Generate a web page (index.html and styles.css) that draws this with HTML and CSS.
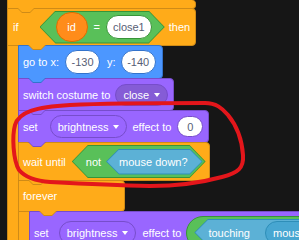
FILE: index.html
```html
<!DOCTYPE html>
<html lang="en">
<head>
	<meta charset="UTF-8">
	<title>if id = close1</title>
	<link rel="stylesheet" href="styles.css">
</head>
<body>

	<div class="script">
		<div class="block control cap"></div>

		<div class="c-block control">
			<div class="c-head if-head">
				<span class="label-if">if</span>
				<div class="hex op eq-hex">
					<div class="hex-in">
						<span class="var-pill">id</span>
						<span class="eq">=</span>
						<span class="field">close1</span>
					</div>
				</div>
				<span class="label-then">then</span>
			</div>
			<div class="c-mouth">
				<div class="c-arm"></div>
				<div class="stack">

					<div class="block motion goto">
						<span>go to x:</span>
						<span class="field">-130</span>
						<span class="label-y">y:</span>
						<span class="field">-140</span>
					</div>

					<div class="block looks switch">
						<span>switch costume to</span>
						<span class="menu shadow">close <i class="arrow"></i></span>
					</div>

					<div class="block looks set">
						<span>set</span>
						<span class="menu">brightness <i class="arrow"></i></span>
						<span>effect to</span>
						<span class="field small">0</span>
					</div>

					<div class="block control wait">
						<span>wait until</span>
						<div class="hex op not-hex">
							<div class="hex-in">
								<span>not</span>
								<div class="hex sense mouse-hex">
									<div class="hex-in">mouse down?</div>
								</div>
							</div>
						</div>
					</div>

					<div class="c-block control">
						<div class="c-head forever-head">
							<span>forever</span>
						</div>
						<div class="c-mouth">
							<div class="c-arm"></div>
							<div class="stack">
								<div class="block looks set-inner">
									<span>set</span>
									<span class="menu">brightness <i class="arrow"></i></span>
									<span class="label-effect">effect to</span>
									<div class="round-op op">
										<div class="hex sense touch-hex">
											<div class="hex-in">
												<span>touching</span>
												<span class="menu sense-menu">mouse-pointer <i class="arrow"></i></span>
											</div>
										</div>
									</div>
								</div>
							</div>
						</div>
					</div>

				</div>
			</div>
		</div>
	</div>

	<svg class="scribble" width="299" height="240" viewBox="0 0 299 240">
		<path d="M 19 170 C 13 160, 12 136, 15 125 C 19 112, 35 107, 70 105 C 110 103, 160 103, 205 103 C 216 103, 222 108, 228 115 C 237 126, 242 140, 243 155 C 244 168, 238 173, 222 177 C 200 183, 175 186, 150 186 C 110 185, 70 183, 50 182 C 35 181, 25 177, 19 170 Z" />
	</svg>

</body>
</html>
```

FILE: styles.css
```css
* {
	margin: 0;
	padding: 0;
	box-sizing: border-box;
}
body {
	background-color: #161616;
	color: #fff;
	font-family: "Liberation Sans", Arial, sans-serif;
	font-size: 11px;
	height: 240px;
	overflow: hidden;
	position: relative;
	width: 299px;
}

/* block colours */
.control {
	--fill: #FFAB19;
	--line: #CF8B17;
}
.motion {
	--fill: #4C97FF;
	--line: #3373CC;
}
.looks {
	--fill: #9966FF;
	--line: #774DCB;
}
.op {
	--fill: #59C059;
	--line: #389438;
}
.sense {
	--fill: #5CB1D6;
	--line: #2E8EB8;
}

.script {
	align-items: flex-start;
	display: flex;
	flex-direction: column;
	padding-left: 7px;
}
.stack {
	align-items: flex-start;
	display: flex;
	flex-direction: column;
}
.stack > * + * {
	margin-top: -1px;
}

.block,
.c-head {
	align-items: center;
	background-color: var(--fill);
	border: 1px solid var(--line);
	border-radius: 0 4px 4px 0;
	display: flex;
	padding: 0 5px 0 4px;
	position: relative;
	white-space: nowrap;
}

/* the tab under each block */
.block::before,
.c-head::before {
	background-color: var(--line);
	clip-path: polygon(0 0, 100% 0, calc(100% - 5px) 100%, 5px 100%);
	content: "";
	height: 5px;
	left: 9px;
	position: absolute;
	top: 100%;
	width: 18px;
	z-index: 3;
}
.block::after,
.c-head::after {
	background-color: var(--fill);
	clip-path: polygon(0 0, 100% 0, calc(100% - 4px) 100%, 4px 100%);
	content: "";
	height: 4px;
	left: 10px;
	position: absolute;
	top: 100%;
	width: 16px;
	z-index: 4;
}
.c-head::before {
	left: 20px;
}
.c-head::after {
	left: 21px;
}

.c-block {
	display: flex;
	flex-direction: column;
	align-items: flex-start;
}
.c-mouth {
	display: flex;
	margin-top: -1px;
}
.c-arm {
	background-color: var(--fill);
	border-left: 1px solid var(--line);
	flex-shrink: 0;
	width: 11px;
}

.cap {
	border-top: none;
	height: 9px;
	width: 189px;
}

.if-head {
	height: 38px;
	margin-top: -1px;
	padding-left: 5px;
}
.label-if {
	margin-right: 21px;
}
.label-then {
	margin-left: 4px;
}

/* hexagon (boolean) shapes */
.hex {
	--s: 16px;
	background-color: var(--line);
	clip-path: polygon(0 50%, var(--s) 0, calc(100% - var(--s)) 0, 100% 50%, calc(100% - var(--s)) 100%, var(--s) 100%);
	display: flex;
	padding: 1px;
}
.hex-in {
	--s: 15px;
	align-items: center;
	background-color: var(--fill);
	clip-path: polygon(0 50%, var(--s) 0, calc(100% - var(--s)) 0, 100% 50%, calc(100% - var(--s)) 100%, var(--s) 100%);
	display: flex;
	flex: 1;
}

.eq-hex {
	height: 33px;
}
.eq-hex > .hex-in {
	padding: 0 12px 0 15px;
}
.eq-hex .field {
	padding: 0 6px;
}
.eq {
	margin: 0 6px;
}

.var-pill {
	align-items: center;
	background-color: #FF8C1A;
	border: 1px solid #DB6E00;
	border-radius: 99px;
	display: flex;
	height: 30px;
	justify-content: center;
	width: 32px;
}

.field {
	align-items: center;
	background-color: #fff;
	border: 1px solid var(--line);
	border-radius: 99px;
	color: #575E75;
	display: flex;
	height: 24px;
	justify-content: center;
	min-width: 35px;
	padding: 0 5px;
}
.field.small {
	height: 21px;
	min-width: 26px;
}

.menu {
	align-items: center;
	border: 1px solid var(--line);
	border-radius: 99px;
	display: flex;
	gap: 5px;
	height: 23px;
	padding: 0 7px 0 7px;
}
.menu.shadow {
	background-color: #855CD6;
	height: 22px;
}
.arrow {
	border-left: 3.5px solid transparent;
	border-right: 3.5px solid transparent;
	border-top: 4px solid #fff;
	height: 0;
	width: 0;
}

.goto {
	gap: 6px;
	height: 34px;
	padding-right: 6px;
}
.label-y {
	margin: 0 -1px 0 1px;
}

.switch {
	gap: 5px;
	height: 33px;
}

.set {
	height: 33px;
	padding-right: 5px;
}
.set .menu {
	margin: 0 5px 0 12px;
}
.set .field {
	margin-left: 6px;
}

.wait {
	height: 39px;
	padding-right: 3px;
}
.not-hex {
	height: 33px;
	margin-left: 6px;
}
.not-hex > .hex-in {
	padding: 0 2px 0 13px;
}
.not-hex > .hex-in > span {
	margin-right: 5px;
}
.mouse-hex {
	--s: 13px;
	height: 26px;
}
.mouse-hex > .hex-in {
	--s: 12px;
	padding: 0 14px 0 12px;
}

.forever-head {
	height: 32px;
	width: 107px;
}

.set-inner {
	height: 43px;
	padding-right: 0;
}
.set-inner .menu {
	height: 24px;
	margin: 0 6px 0 10px;
}
.label-effect {
	margin-right: 5px;
}
.round-op {
	align-items: center;
	background-color: var(--fill);
	border: 1px solid var(--line);
	border-radius: 99px;
	display: flex;
	height: 34px;
	padding: 0 6px 0 7px;
}
.touch-hex {
	--s: 14px;
	height: 28px;
}
.touch-hex > .hex-in {
	--s: 13px;
	padding: 0 14px 0 13px;
}
.touch-hex span:first-child {
	margin-right: 5px;
}
.sense-menu {
	background-color: #47A6D1;
	height: 21px;
}

/* red hand drawn ring */
.scribble {
	left: 0;
	pointer-events: none;
	position: absolute;
	top: 0;
	z-index: 10;
}
.scribble path {
	fill: none;
	stroke: #E3161B;
	stroke-linecap: round;
	stroke-width: 4;
}
```
